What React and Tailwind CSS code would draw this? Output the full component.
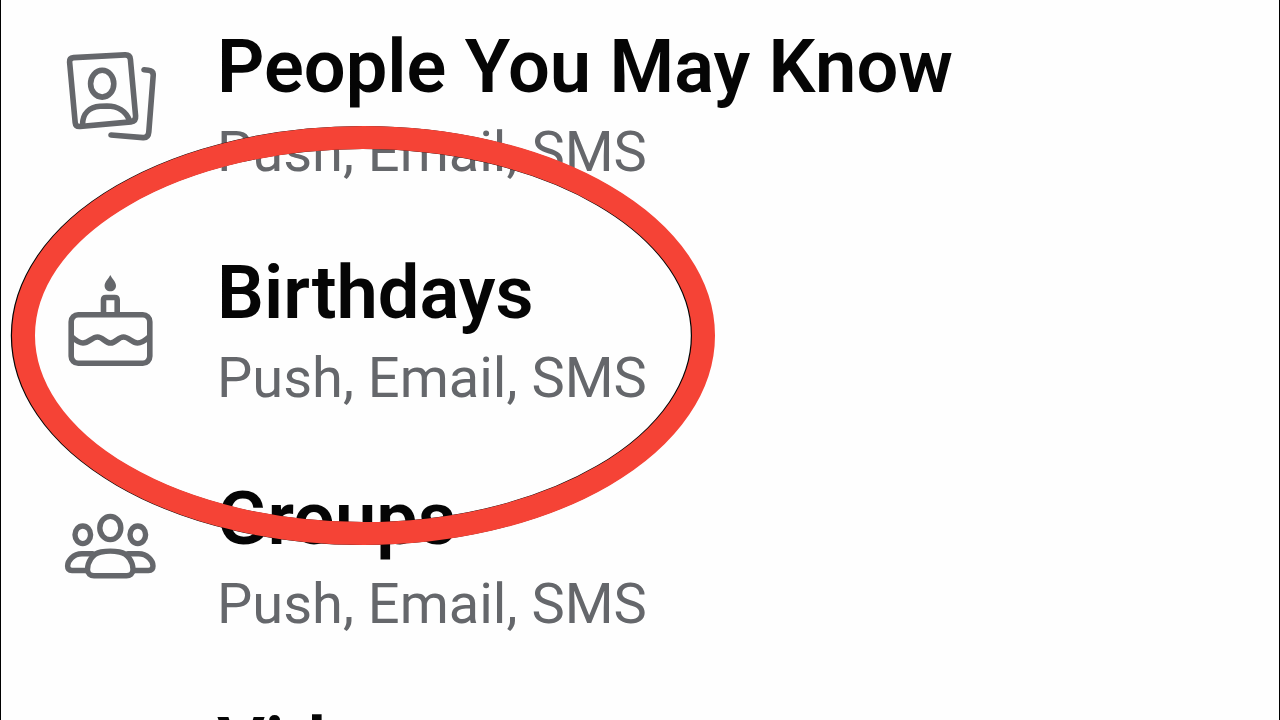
function PeopleIcon() {
  return (
    <svg
      viewBox="0 0 92 92"
      className="h-[92px] w-[92px]"
      fill="none"
      stroke="currentColor"
      strokeWidth="5.6"
      strokeLinecap="round"
      strokeLinejoin="round"
      aria-hidden="true"
    >
      <path d="M9.500 7.600 L61 4.900 Q66 4.700 66.400 9.300 L71.600 66 Q72 71.400 67 71.900 L16 76.500 Q11.600 76.800 11.200 72.700 L5.600 12 Q5.300 8 9.500 7.600 Z" />
      <ellipse cx="38.200" cy="33.700" rx="11.600" ry="13.400" />
      <path d="M18.500 75 C18.500 63 26 57 36 56.300 L43 56 C54 56 62 61.500 65.500 70.500" />
      <path d="M80 19.800 L84.500 20.200 Q89.600 20.700 89.200 25.500 L84.800 82 Q84.300 88 79 87.600 L47 85" />
    </svg>
  );
}

function CakeIcon() {
  return (
    <svg
      viewBox="0 0 92 92"
      className="h-[92px] w-[92px] overflow-visible"
      fill="none"
      stroke="currentColor"
      strokeWidth="5.6"
      strokeLinejoin="round"
      aria-hidden="true"
    >
      <path d="M46.300 -1 C48 2.500 52 6 52 9.700 C52 13 49.500 15.300 46.300 15.300 C43.100 15.300 40.600 13 40.600 9.700 C40.600 6 44.600 2.500 46.300 -1 Z" fill="currentColor" stroke="none" />
      <path d="M39.500 38 V24 Q39.500 21.500 42 21.500 H50.700 Q53.200 21.500 53.200 24 V38" />
      <rect x="7.200" y="38.700" width="78.600" height="48.600" rx="7" />
      <path d="M8 61 C13 65.500 16 67 19 67 C25 67 28 61 33.500 61 C39 61 41 67 46.500 67 C52 67 54 61 59.500 61 C65 61 68 67 73.500 67 C77 67 80 65.500 85 61" />
    </svg>
  );
}

function GroupsIcon() {
  return (
    <svg
      viewBox="0 0 92 92"
      className="h-[92px] w-[92px]"
      fill="none"
      stroke="currentColor"
      strokeWidth="5.4"
      strokeLinecap="round"
      strokeLinejoin="round"
      aria-hidden="true"
    >
      <ellipse cx="46.300" cy="26" rx="10.500" ry="11.600" />
      <ellipse cx="18.800" cy="32.800" rx="7.800" ry="8.800" />
      <ellipse cx="73.800" cy="32.800" rx="7.800" ry="8.800" />
      <path d="M37 50 Q46.300 48.300 55.500 50 C64.500 51.500 69 60.500 69 67.500 C69 71.500 66 73.800 62.500 73.800 H30 C26.500 73.800 23.500 71.500 23.500 67.500 C23.500 60.500 28 51.500 37 50 Z" />
      <path d="M28.500 51.800 H18 C9 51.800 3.600 59 3.600 64 C3.600 67 5 68.500 8 68.500 H23" />
      <path d="M64 51.800 H74.500 C83.500 51.800 89 59 89 64 C89 67 87.500 68.500 84.500 68.500 H69.500" />
    </svg>
  );
}

const items = [
  { title: 'People You May Know', channels: 'Push, Email, SMS', Icon: PeopleIcon },
  { title: 'Birthdays', channels: 'Push, Email, SMS', Icon: CakeIcon },
  { title: 'Groups', channels: 'Push, Email, SMS', Icon: GroupsIcon },
  { title: 'Video' },
];

function SettingRow({ title, channels, Icon }) {
  return (
    <li>
      <button type="button" className="flex w-full items-start gap-[61px] text-left">
        <span className="w-[92px] shrink-0 pt-[27px] text-[#65676b]">
          {Icon && <Icon />}
        </span>
        <span className="flex flex-col gap-2 whitespace-nowrap">
          <span className="text-[74px] leading-[88px] font-semibold text-[#050505]">{title}</span>
          {channels && (
            <span className="text-[56px] leading-[66px] font-[450] text-[#65676b]">{channels}</span>
          )}
        </span>
      </button>
    </li>
  );
}

// Red ring drawn over the Birthdays row
function Highlight() {
  return (
    <svg
      viewBox="0 0 710 424"
      className="pointer-events-none absolute top-[124px] left-[7px] w-[710px]"
      fill="none"
      strokeWidth="23"
      aria-hidden="true"
    >
      <ellipse cx="354.300" cy="211.500" rx="340" ry="198" stroke="#050505" />
      <ellipse cx="355.500" cy="211.500" rx="340" ry="198" stroke="#f54336" />
    </svg>
  );
}

export default function App() {
  return (
    <main className="relative h-screen overflow-hidden border-x border-black bg-[#fefefe] font-['Roboto',sans-serif]">
      <ul className="flex flex-col gap-16 px-[63px] pt-[23px]">
        {items.map((item) => (
          <SettingRow key={item.title} {...item} />
        ))}
      </ul>
      <Highlight />
    </main>
  );
}
